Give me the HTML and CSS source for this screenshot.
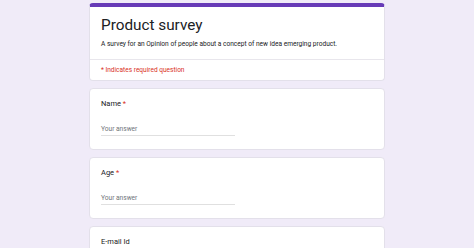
FILE: index.html
```html
<!DOCTYPE html>
<html lang="en">
<head>
<meta charset="utf-8">
<title>Product survey</title>
<link rel="stylesheet" href="styles.css">
</head>
<body>
<main class="form">
  <section class="card header-card">
    <div class="header-main">
      <h1 class="title">Product survey</h1>
      <p class="desc">A survey for an Opinion of people about a concept of new idea emerging product.</p>
    </div>
    <div class="required-note">* Indicates required question</div>
  </section>

  <section class="card question">
    <div class="label">Name <span class="star">*</span></div>
    <div class="answer">Your answer</div>
  </section>

  <section class="card question">
    <div class="label">Age <span class="star">*</span></div>
    <div class="answer">Your answer</div>
  </section>

  <section class="card question">
    <div class="label">E-mail Id</div>
    <div class="answer">Your answer</div>
  </section>
</main>
</body>
</html>
```
FILE: styles.css
```css
html, body {
  margin: 0;
  padding: 0;
  height: 100%;
  overflow: hidden;
}
body {
  background: #f0ebf8;
  font-family: Roboto, "Liberation Sans", Arial, sans-serif;
  color: #202124;
}
.form {
  width: 296px;
  margin: 0 auto;
  padding-top: 3px;
  display: flex;
  flex-direction: column;
  gap: 7px;
}
.card {
  background: #ffffff;
  border: 1px solid #e3e0ea;
  border-radius: 4px;
  box-sizing: border-box;
}
.header-card {
  border-top: 4px solid #673ab7;
}
.header-main {
  padding: 7.7px 11px 10.3px 11px;
  border-bottom: 1px solid #e8e6ec;
}
.title {
  margin: 0 0 4.3px 0;
  font-size: 15.3px;
  line-height: 20px;
  font-weight: 400;
  color: #202124;
}
.desc {
  margin: 0;
  font-size: 6.58px;
  line-height: 10px;
  color: #202124;
}
.required-note {
  padding: 5px 11px 4.7px 11px;
  font-size: 6.55px;
  line-height: 10px;
  color: #d93025;
}
.question {
  padding: 9.5px 11px 13px 11px;
}
.label {
  font-size: 7.5px;
  line-height: 12px;
  font-weight: 400;
  color: #202124;
  margin-bottom: 14px;
}
.star {
  color: #d93025;
}
.answer {
  width: 134px;
  font-size: 6.6px;
  line-height: 10px;
  color: #70757a;
  padding-bottom: 0.5px;
  border-bottom: 1px solid #e0e0e0;
}
```
